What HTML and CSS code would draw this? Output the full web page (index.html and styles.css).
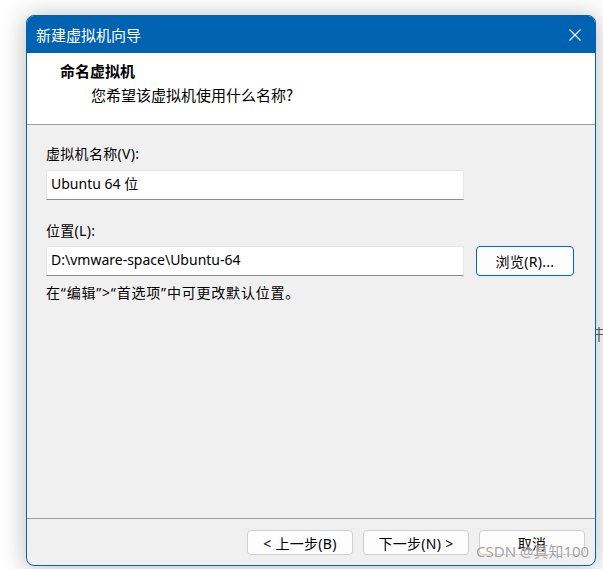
FILE: index.html
```
<!DOCTYPE html>
<html lang="zh-CN">
<head>
    <meta charset="UTF-8">
    <meta name="viewport" content="width=device-width, initial-scale=1.0">
    <title>新建虚拟机向导</title>
    <link rel="stylesheet" href="styles.css">
</head>
<body>
    <div class="window">
        <div class="titlebar">
            <span class="title">新建虚拟机向导</span>
            <svg class="close" width="12" height="12" viewBox="0 0 12 12">
                <path d="M0.5 0.5 L11.5 11.5 M11.5 0.5 L0.5 11.5" stroke="#fff" stroke-width="1.1" fill="none"/>
            </svg>
        </div>
        <div class="header">
            <div class="header-title">命名虚拟机</div>
            <div class="header-sub">您希望该虚拟机使用什么名称?</div>
        </div>
        <div class="content">
            <div class="label first">虚拟机名称(V):</div>
            <input class="field" type="text" value="Ubuntu 64 位">
            <div class="label">位置(L):</div>
            <div class="row">
                <input class="field" type="text" value="D:\vmware-space\Ubuntu-64">
                <button class="btn btn-default">浏览(R)...</button>
            </div>
            <div class="hint">在“编辑”&gt;“首选项”中可更改默认位置。</div>
        </div>
        <div class="footer">
            <button class="btn">&lt; 上一步(B)</button>
            <button class="btn">下一步(N) &gt;</button>
            <button class="btn">取消</button>
        </div>
    </div>

    <svg class="cursor" width="8" height="18" viewBox="0 0 8 18">
        <path d="M4 2 V17 M1 4.5 H8 M1 9.5 H8" stroke="#555" stroke-width="1.2" fill="none"/>
    </svg>
    <div class="watermark">CSDN @真知100</div>
</body>
</html>
```

FILE: styles.css
```
body {
    margin: 0;
    width: 603px;
    height: 569px;
    overflow: hidden;
    background: #fff;
    font-family: "Noto Sans", "Noto Sans CJK SC", sans-serif;
    font-size: 14px;
    color: #000;
    padding: 15px 0 0 26px;
    box-sizing: border-box;
}
.window {
    width: 570px;
    height: 551px;
    box-sizing: border-box;
    border: 1px solid #0063b1;
    border-radius: 8px;
    overflow: hidden;
    background: #f0f0f0;
    display: flex;
    flex-direction: column;
    box-shadow: 0 2px 24px 2px rgba(0, 0, 0, 0.24);
}
.titlebar {
    height: 37px;
    flex-shrink: 0;
    background: #0063b1;
    display: flex;
    align-items: center;
    justify-content: space-between;
    padding: 0 14px 0 9px;
}
.title {
    color: #fff;
    font-size: 15px;
    line-height: 20px;
    font-family: "Noto Sans CJK SC", sans-serif;
}
.close {
    display: block;
}
.header {
    height: 72px;
    flex-shrink: 0;
    box-sizing: border-box;
    background: #fff;
    border-bottom: 1px solid #a0a0a0;
    padding: 8px 0 0 33px;
    font-family: "Noto Sans CJK SC", sans-serif;
}
.header-title {
    font-size: 15px;
    font-weight: bold;
    line-height: 20px;
}
.header-sub {
    font-size: 15px;
    line-height: 20px;
    margin: 4px 0 0 31px;
}
.content {
    flex-grow: 1;
    padding: 0 19px;
}
.label {
    line-height: 20px;
    letter-spacing: 0.3px;
    margin: 21px 0 5px;
}
.label.first {
    margin: 19px 0 6px;
}
.field {
    display: block;
    width: 418px;
    height: 30px;
    box-sizing: border-box;
    margin: 0;
    padding: 0 4px 4px;
    border: 1px solid #e6e6e6;
    border-bottom-color: #8a8a8a;
    border-radius: 2px 2px 0 0;
    background: #fff;
    font: inherit;
    color: #000;
    outline: none;
}
.row {
    display: flex;
    align-items: center;
    gap: 12px;
}
.btn {
    height: 25px;
    width: 106px;
    box-sizing: border-box;
    border: 1px solid #d0d0d0;
    border-radius: 4px;
    background: #fdfdfd;
    font: inherit;
    letter-spacing: 0.3px;
    color: #000;
    padding: 0;
}
.btn-default {
    width: 98px;
    height: 30px;
    border-color: #0067c0;
}
.hint {
    line-height: 20px;
    letter-spacing: 0.8px;
    margin-top: 7px;
}
.footer {
    height: 47px;
    flex-shrink: 0;
    box-sizing: border-box;
    border-top: 1px solid #a0a0a0;
    display: flex;
    justify-content: flex-end;
    gap: 10px;
    padding: 11px 10px 0 0;
}
.cursor {
    position: absolute;
    left: 595px;
    top: 325px;
}
.watermark {
    position: absolute;
    left: 476px;
    top: 541px;
    font-size: 15px;
    line-height: 20px;
    color: rgba(120, 120, 120, 0.7);
    text-shadow: 0 0 1px #fff;
}
```
